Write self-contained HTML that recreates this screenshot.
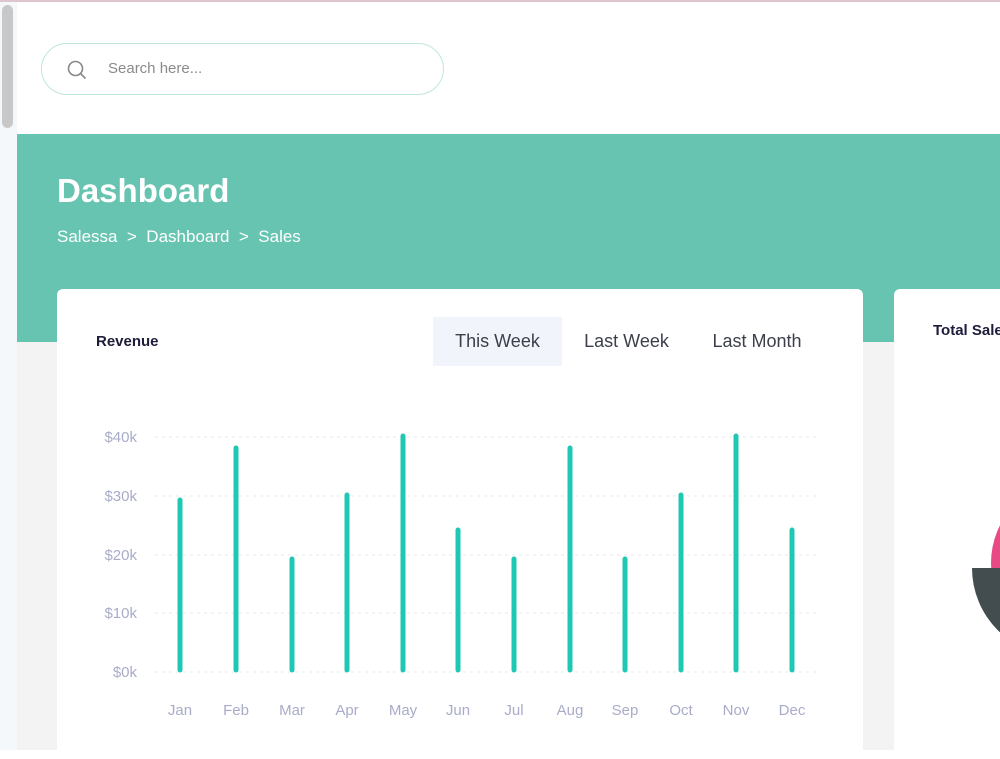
<!DOCTYPE html>
<html><head><meta charset="utf-8"><style>
*{margin:0;padding:0;box-sizing:border-box}
body{width:1000px;height:750px;overflow:hidden;background:#fff;font-family:"Liberation Sans",sans-serif;position:relative}
.topline{position:absolute;left:0;top:0;width:1000px;height:2px;background:#dcc5cc}
.leftstrip{position:absolute;left:0;top:2px;width:17px;height:748px;background:#f5f8fb}
.scroll{position:absolute;left:2px;top:3px;width:11px;height:123px;background:#c8c8c8;border-radius:6px}
.search{position:absolute;left:41px;top:43px;width:403px;height:52px;border:1px solid #bfe6dc;border-radius:26px;background:#fff}
.search span{position:absolute;left:66px;top:16px;font-size:15px;color:#8a8a8a}
.banner{position:absolute;left:17px;top:134px;width:983px;height:208px;background:#66c4b1}
.gray{position:absolute;left:17px;top:342px;width:983px;height:408px;background:#f3f3f3}
h1{position:absolute;left:57px;top:172px;font-size:33px;color:#fff;font-weight:bold}
.crumb{position:absolute;left:57px;top:227px;font-size:17px;color:#fff}
.card{position:absolute;left:57px;top:289px;width:806px;height:470px;background:#fff;border-radius:6px}
.card2{position:absolute;left:894px;top:289px;width:120px;height:470px;background:#fff;border-radius:6px;overflow:hidden}
.t{position:absolute;font-size:15px;font-weight:bold;color:#1d1d3a}
.tab{position:absolute;top:28px;height:49px;line-height:49px;font-size:18px;color:#3b3f4a;text-align:center}
</style></head><body>
<div class="topline"></div>
<div class="leftstrip"><div class="scroll"></div></div>
<div class="search">
<svg style="position:absolute;left:24px;top:15px" width="22" height="22" viewBox="0 0 22 22"><circle cx="9.5" cy="9.5" r="7" fill="none" stroke="#888" stroke-width="1.6"/><line x1="14.5" y1="14.5" x2="19" y2="19" stroke="#888" stroke-width="1.6" stroke-linecap="round"/></svg>
<span>Search here...</span></div>
<div class="banner"></div>
<div class="gray"></div>
<h1>Dashboard</h1>
<div class="crumb">Salessa &nbsp;&gt;&nbsp; Dashboard &nbsp;&gt;&nbsp; Sales</div>
<div class="card">
<div class="t" style="left:39px;top:44px">Revenue</div>
<div class="tab" style="left:376px;width:129px;background:#f1f4fa">This Week</div>
<div class="tab" style="left:505px;width:129px">Last Week</div>
<div class="tab" style="left:634px;width:132px">Last Month</div>
</div>
<svg style="position:absolute;left:0;top:0" width="1000" height="750">
<g stroke="#e6e8ef" stroke-dasharray="3,4" stroke-width="1">
<line x1="155" y1="437" x2="820" y2="437"/><line x1="155" y1="496" x2="820" y2="496"/><line x1="155" y1="555" x2="820" y2="555"/><line x1="155" y1="613" x2="820" y2="613"/><line x1="155" y1="672" x2="820" y2="672"/></g>
<g font-family="Liberation Sans,sans-serif" font-size="15" fill="#a9acc8" text-anchor="end">
<text x="137" y="442">$40k</text><text x="137" y="501">$30k</text><text x="137" y="560">$20k</text><text x="137" y="618">$10k</text><text x="137" y="677">$0k</text></g>
<g stroke="#1fc8b3" stroke-width="5" stroke-linecap="round">
<line x1="180" y1="500" x2="180" y2="670"/><line x1="236" y1="448" x2="236" y2="670"/><line x1="292" y1="559" x2="292" y2="670"/><line x1="347" y1="495" x2="347" y2="670"/><line x1="403" y1="436" x2="403" y2="670"/><line x1="458" y1="530" x2="458" y2="670"/><line x1="514" y1="559" x2="514" y2="670"/><line x1="570" y1="448" x2="570" y2="670"/><line x1="625" y1="559" x2="625" y2="670"/><line x1="681" y1="495" x2="681" y2="670"/><line x1="736" y1="436" x2="736" y2="670"/><line x1="792" y1="530" x2="792" y2="670"/></g>
<g font-family="Liberation Sans,sans-serif" font-size="15" fill="#a9acc8" text-anchor="middle">
<text x="180" y="715">Jan</text><text x="236" y="715">Feb</text><text x="292" y="715">Mar</text><text x="347" y="715">Apr</text><text x="403" y="715">May</text><text x="458" y="715">Jun</text><text x="514" y="715">Jul</text><text x="570" y="715">Aug</text><text x="625" y="715">Sep</text><text x="681" y="715">Oct</text><text x="736" y="715">Nov</text><text x="792" y="715">Dec</text></g>
</svg>
<div class="card2">
<div class="t" style="left:39px;top:33px;white-space:nowrap">Total Sales</div>
<svg style="position:absolute;left:0;top:0" width="120" height="470">
<circle cx="181" cy="274" r="84" fill="#e84a86"/>
<path d="M78 279 L166 279 L166 367 A88 88 0 0 1 78 279 Z" fill="#434d4f"/>
</svg>
</div>
</body></html>
